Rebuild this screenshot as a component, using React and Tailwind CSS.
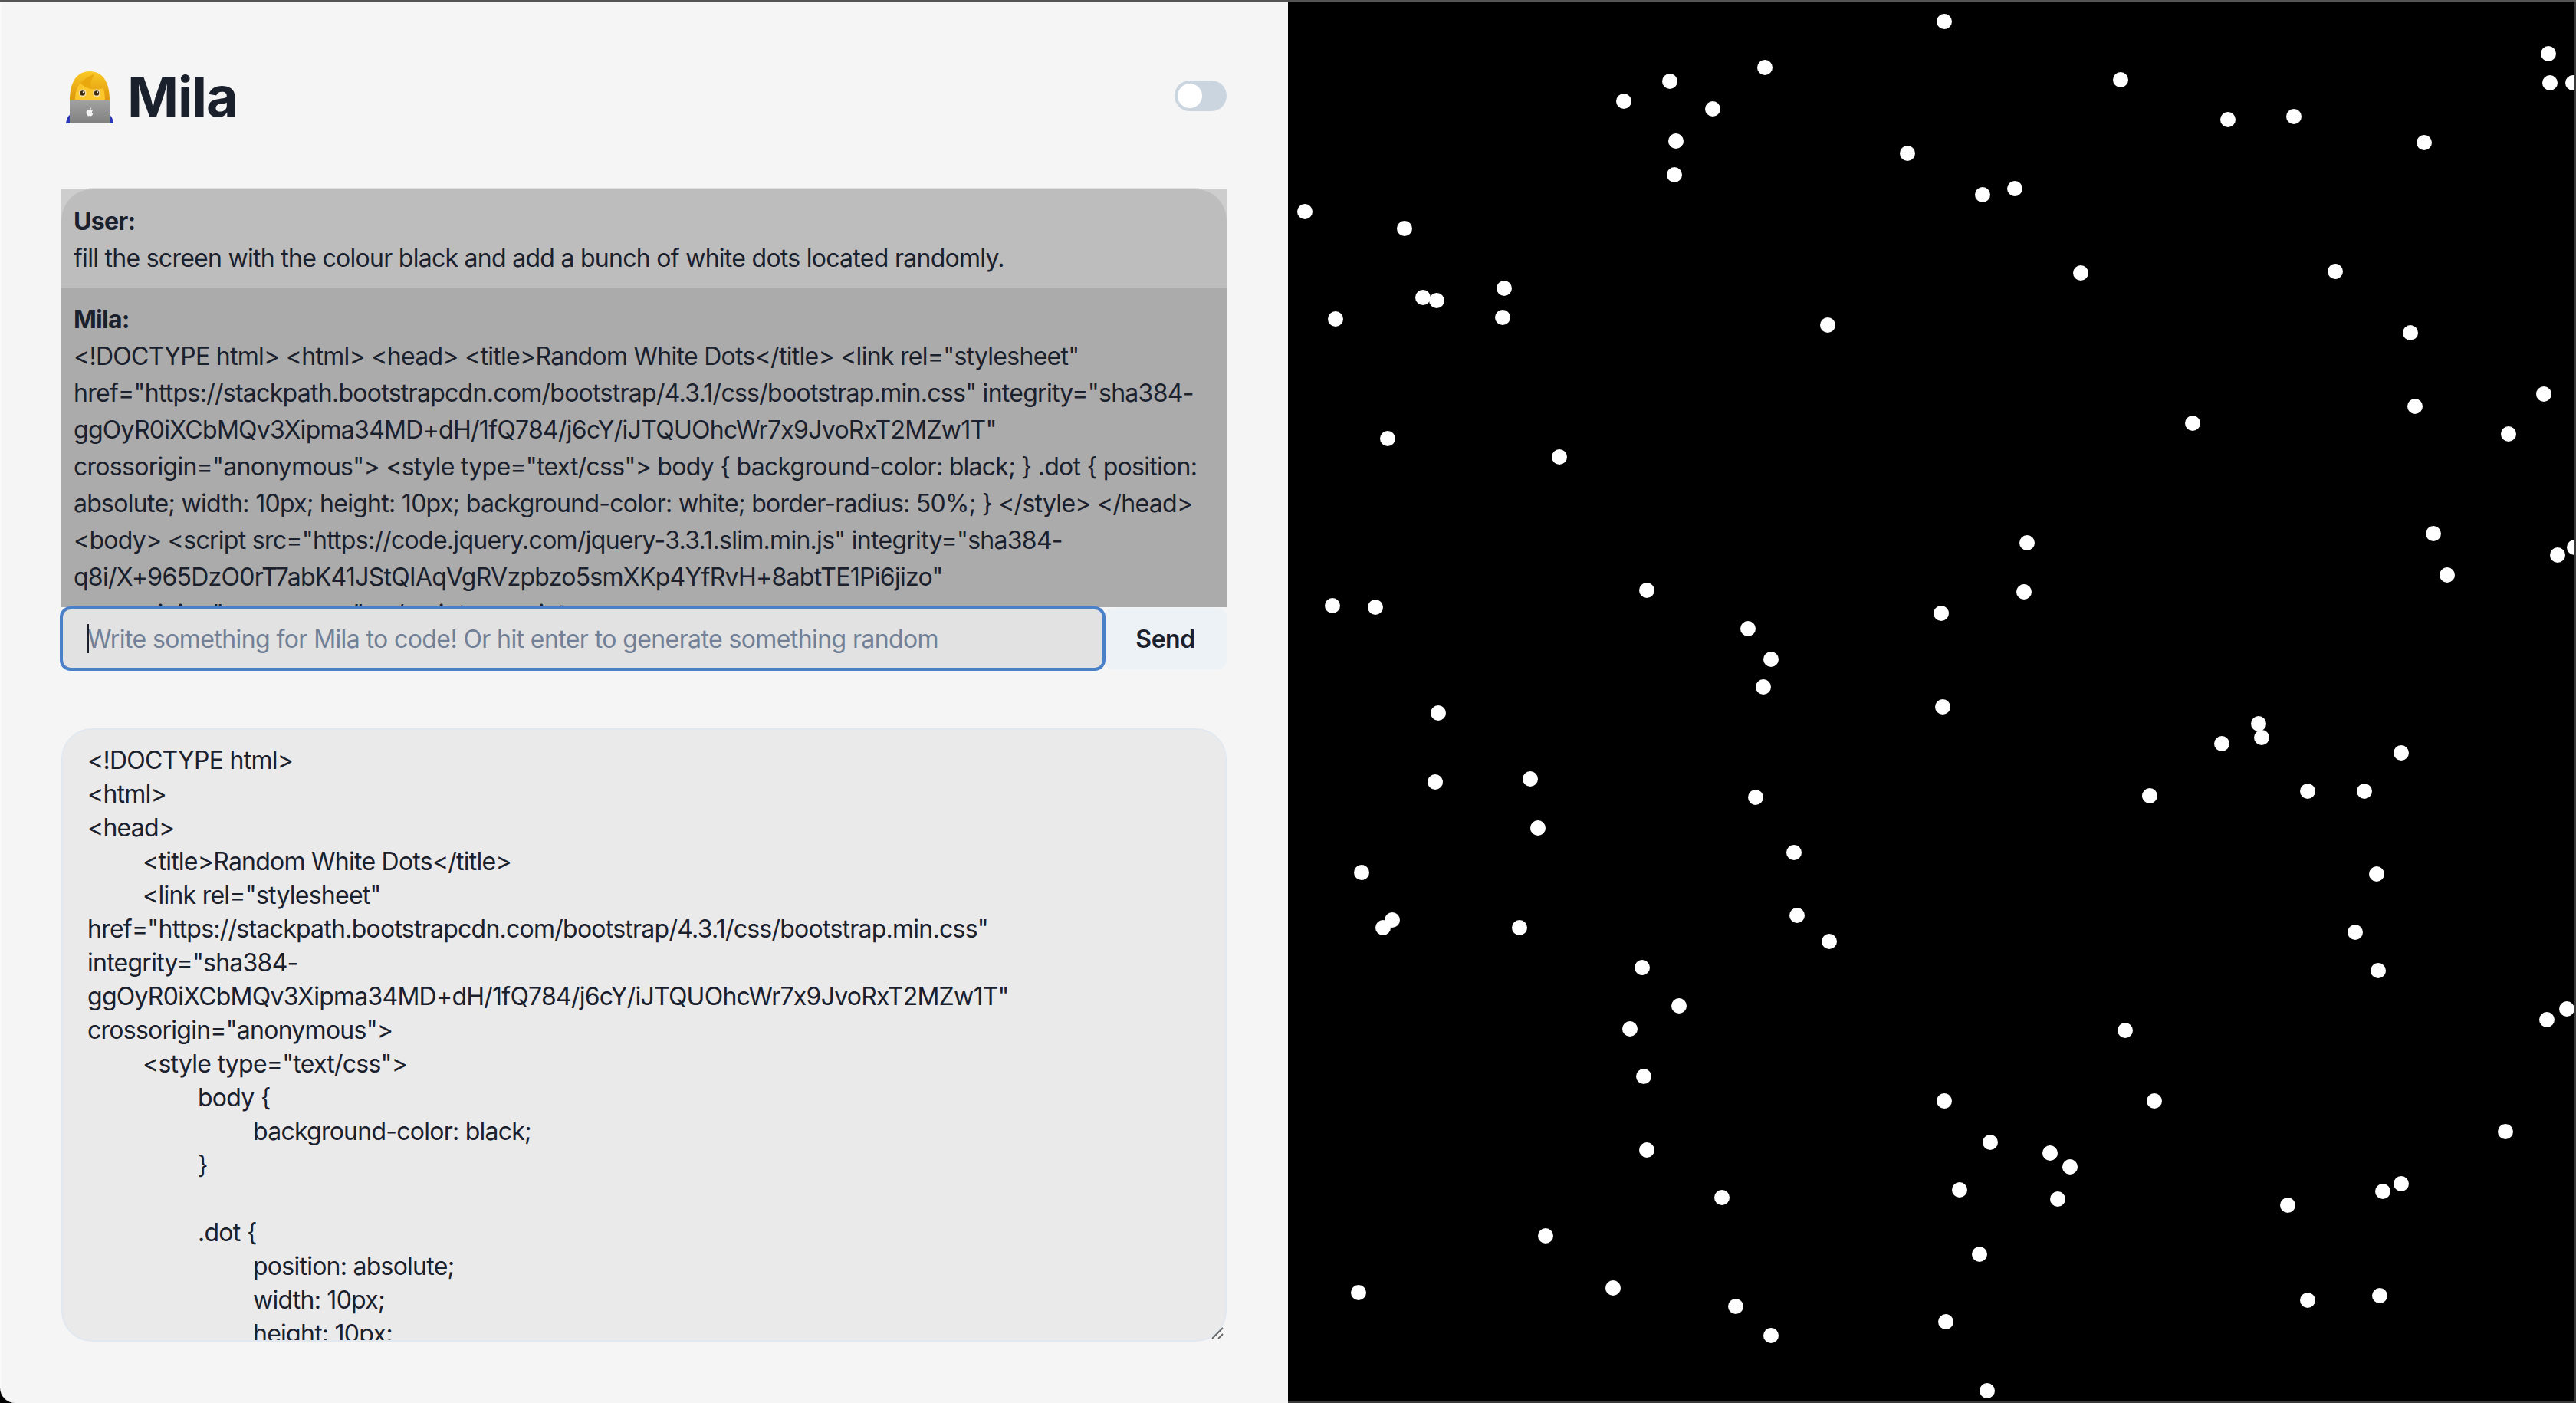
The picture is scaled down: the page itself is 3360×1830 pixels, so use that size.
import React from "react";

const inter = "font-['Inter','Liberation_Sans',sans-serif]";

const code = `<!DOCTYPE html>
<html>
<head>
\t<title>Random White Dots</title>
\t<link rel="stylesheet" href="https://stackpath.bootstrapcdn.com/bootstrap/4.3.1/css/bootstrap.min.css" integrity="sha384-ggOyR0iXCbMQv3Xipma34MD+dH/1fQ784/j6cY/iJTQUOhcWr7x9JvoRxT2MZw1T" crossorigin="anonymous">
\t<style type="text/css">
\t\tbody {
\t\t\tbackground-color: black;
\t\t}

\t\t.dot {
\t\t\tposition: absolute;
\t\t\twidth: 10px;
\t\t\theight: 10px;
\t\t\tbackground-color: white;
\t\t\tborder-radius: 50%;
\t\t}
\t</style>
</head>`;

const answer = `<!DOCTYPE html> <html> <head> <title>Random White Dots</title> <link rel="stylesheet" href="https://stackpath.bootstrapcdn.com/bootstrap/4.3.1/css/bootstrap.min.css" integrity="sha384-ggOyR0iXCbMQv3Xipma34MD+dH/1fQ784/j6cY/iJTQUOhcWr7x9JvoRxT2MZw1T" crossorigin="anonymous"> <style type="text/css"> body { background-color: black; } .dot { position: absolute; width: 10px; height: 10px; background-color: white; border-radius: 50%; } </style> </head> <body> <script src="https://code.jquery.com/jquery-3.3.1.slim.min.js" integrity="sha384-q8i/X+965DzO0rT7abK41JStQIAqVgRVzpbzo5smXKp4YfRvH+8abtTE1Pi6jizo" crossorigin="anonymous"></script> <script src="https://cdnjs.cloudflare.com/ajax/libs/popper.js/1.14.7/umd/popper.min.js"`;

// dot centres, measured on the 1568 wide picture
const dots = [
  [1183,13],[1551,32],[1016,49],[1074,41],[1291,48],[1552,50],[1566,50],[988,61],[1042,66],[1356,73],
  [1396,71],[1475,87],[1020,86],[1161,93],[1019,106],[1207,118],[1226,115],[794,129],[855,139],[1266,166],
  [1421,165],[866,181],[874,183],[915,175],[914,193],[813,194],[1112,198],[1467,202],[1470,247],[1548,240],
  [1334,257],[1527,264],[844,267],[949,278],[1481,325],[1234,330],[1557,338],[1567,333],[1489,350],[1232,360],
  [1002,359],[811,368],[837,369],[1181,373],[1064,382],[1078,401],[1073,418],[1182,430],[875,434],[1375,440],
  [1376,449],[1352,452],[1461,458],[873,476],[931,474],[1404,481],[1439,481],[1068,485],[1308,484],[936,504],
  [1092,519],[829,531],[1446,532],[847,560],[842,564],[925,564],[1094,557],[1433,567],[1113,573],[999,589],
  [1447,591],[1022,612],[1562,614],[1550,620],[992,626],[1293,627],[1000,655],[1183,670],[1311,670],[1525,689],
  [1211,695],[1248,702],[1260,710],[1002,700],[1193,724],[1461,720],[1450,725],[1048,729],[1252,730],[1392,733],
  [941,752],[1205,763],[982,784],[827,787],[1404,791],[1448,788],[1056,795],[1184,804],[1078,813],[1209,846],
];

const snap = (v) => Math.round(v / 2) * 2;

function Emoji() {
  return (
    <svg width="62" height="68" viewBox="0 0 62 68" className="shrink-0 ml-[6px] mt-[4px]">
      <defs>
        <linearGradient id="hair" x1="0" y1="0" x2="0" y2="1">
          <stop offset="0" stopColor="#fbc926" />
          <stop offset="1" stopColor="#dd960a" />
        </linearGradient>
        <linearGradient id="lid" x1="0" y1="0" x2="0" y2="1">
          <stop offset="0" stopColor="#a2a2a2" />
          <stop offset="1" stopColor="#808080" />
        </linearGradient>
      </defs>
      <path d="M0 68 C1 61 3 57 8 55 L54 55 C59 57 61 61 62 68 Z" fill="#2b35b8" />
      <path d="M5 38 C5 14 14 0 31 0 C48 0 57 14 57 38 Z" fill="url(#hair)" />
      <path d="M12 38 C12 28 14 22 19 15 C26 24 38 25 49 22 C50 28 51 32 51 38 Z" fill="#fcc72c" />
      <path d="M19 15 C24 10 30 6 37 4 C33 11 31 17 33 22 C27 21 22 19 19 15 Z" fill="#eaa80f" />
      <circle cx="21.7" cy="28.4" r="5" fill="#f3deab" />
      <circle cx="40" cy="28.4" r="5" fill="#f3deab" />
      <circle cx="21.7" cy="28.4" r="3.2" fill="#3f2a0c" />
      <circle cx="40" cy="28.4" r="3.2" fill="#3f2a0c" />
      <circle cx="22.8" cy="27.2" r="1" fill="#ffffff" />
      <circle cx="41.1" cy="27.2" r="1" fill="#ffffff" />
      <rect x="5" y="37" width="52" height="31" rx="1.5" fill="url(#lid)" />
      <path d="M31 50.5 C32.5 49.6 34.6 50 35 51.2 C33.4 52.4 33.6 54.8 35.3 55.6 C34.6 57.4 33.6 58.4 32.8 58.4 C32 58.4 31.6 58 31 58 C30.4 58 29.9 58.4 29.2 58.4 C28 58.4 26.6 55.6 26.6 53.6 C26.6 51 28.8 49.8 31 50.5 Z M31 50 C31 48.6 32 47.6 33.2 47.4 C33.3 48.8 32.3 49.9 31 50 Z" fill="#f4f4f4" />
    </svg>
  );
}

export default function App() {
  return (
    <div className={`${inter} flex flex-col w-[3360px] h-[1830px] overflow-hidden bg-black text-[#1a202c]`}>
      <div className="h-[2px] shrink-0 bg-[#555555]" />
      <div className="flex flex-1 min-h-0">
        <div className="w-[1680px] h-full shrink-0 bg-[#f5f5f5] border-l-2 border-[#f9f9f9] rounded-bl-[20px] flex flex-col pl-[78px] pr-[80px] pt-[43px]">
          <header className="flex items-center justify-between h-[160px] mb-[40px]">
            <div className="flex items-center gap-[18px]">
              <Emoji />
              <h1 className="text-[72px] leading-[80px] font-bold tracking-[-1px] pt-[2px]">Mila</h1>
            </div>
            <div className="flex items-center w-[68px] h-[40px] p-[4px] rounded-full bg-[#cbd5e0]">
              <span className="block w-[32px] h-[32px] rounded-full bg-white" />
            </div>
          </header>

          <div className="h-[547px] overflow-hidden text-[32px] leading-[48px] tracking-[-0.72px]">
            <div className="h-[2px] mx-[36px] bg-[#e2e2e2]" />
            <div className="bg-[#cdcdcd]">
              <div className="rounded-t-[40px] bg-[#bdbdbd] px-[16px] pt-[18px] pb-[14px]">
                <p className="font-bold">User:</p>
                <p>fill the screen with the colour black and add a bunch of white dots located randomly.</p>
              </div>
            </div>
            <div className="bg-[#ababab] px-[16px] pt-[18px] pb-[14px]">
              <p className="font-bold">Mila:</p>
              <p>{answer}</p>
            </div>
          </div>

          <div className="flex h-[80px] mt-[1px]">
            <div className="relative flex-1">
              <input
                readOnly
                placeholder="Write something for Mila to code! Or hit enter to generate something random"
                className="w-full h-full rounded-[12px] border-2 border-[#4a80c8] ring-2 ring-[#4a80c8] bg-[#e2e2e2] px-[32px] text-[32px] tracking-[-0.6px] outline-none placeholder:text-[#718096]"
              />
              <span className="absolute left-[34px] top-[21px] w-[2px] h-[38px] bg-[#1a202c]" />
            </div>
            <button className="w-[160px] rounded-[12px] bg-[#edf2f7] text-[32px] font-semibold tracking-[-0.5px] pt-[1px]">Send</button>
          </div>

          <div className="relative mt-[77px] h-[800px]">
            <textarea
              readOnly
              value={code}
              className="block w-full h-full resize-none overflow-hidden rounded-[40px] border-2 border-[#e2e8f0] bg-[#eaeaea] px-[32px] pt-[18px] pb-[14px] text-[32px] leading-[44px] tracking-[-0.75px] [tab-size:72px] outline-none"
            />
            <svg width="16" height="16" viewBox="0 0 16 16" className="absolute right-[4px] bottom-[3px]">
              <path d="M1 15 L15 1 M9 15 L15 9" stroke="#666666" strokeWidth="2" />
            </svg>
          </div>
        </div>

        <div className="relative flex-1 h-full bg-black overflow-hidden border-r-2 border-b-2 border-[#3a3a3a]">
          {dots.map(([x, y], i) => (
            <span
              key={i}
              className="absolute w-[20px] h-[20px] rounded-full bg-white"
              style={{ left: snap(x * 2.1429 - 1680 + 0.5) - 10, top: snap(y * 2.1429 + 0.5) - 12 }}
            />
          ))}
        </div>
      </div>
    </div>
  );
}
